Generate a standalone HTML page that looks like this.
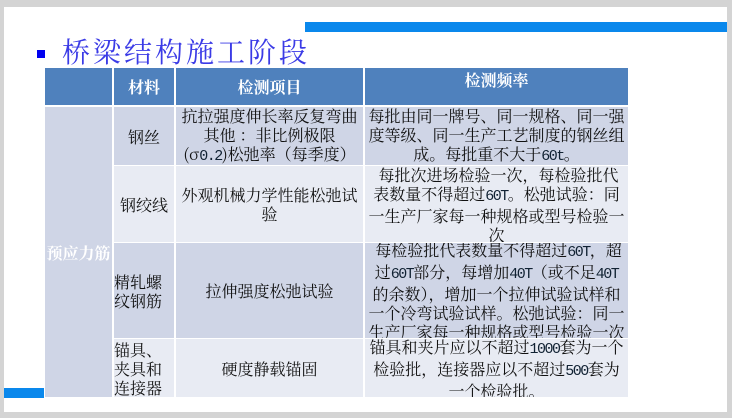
<!DOCTYPE html><html><head><meta charset="utf-8"><style>
body{margin:0;width:732px;height:418px;background:#d4d4d4;position:relative;overflow:hidden;font-family:"Liberation Serif","Noto Serif CJK SC",serif}
.slide{position:absolute;left:4px;top:7px;width:723px;height:405px;background:#fff}
.bar{position:absolute;background:#0a88ec}
.t{position:absolute;left:62px;top:33px;font-size:28px;letter-spacing:3px;color:#3b3be6;font-family:"Noto Serif CJK SC",serif;line-height:36px;white-space:nowrap}
.b{position:absolute;left:37px;top:50px;width:8px;height:8px;background:#0000f0}
.c{position:absolute;display:flex;flex-direction:column;justify-content:center;align-items:center;text-align:center;font-size:16px;line-height:19px;color:#111;white-space:nowrap;font-family:"Noto Serif CJK SC",serif;overflow:hidden}
.c>div{text-align:inherit}
.h{background:#4f81bd;color:#fff;font-weight:bold}
.d{background:#cfd5e6}.l{background:#e8ebf3}
.w{color:#fff;font-weight:bold}
.n{font-family:"Liberation Mono",monospace;font-size:15px;letter-spacing:-1.5px;color:#123}
</style></head><body>
<div class="slide"></div>
<div class="bar" style="left:305px;top:22px;width:422px;height:10px"></div>
<div class="bar" style="left:4px;top:388px;width:40px;height:10px"></div>
<div class="b"></div><div class="t">桥梁结构施工阶段</div>

<div class="c h" style="left:45px;top:68px;width:67px;height:37px"></div>
<div class="c h" style="left:114px;top:68px;width:60px;height:37px"><div>材料</div></div>
<div class="c h" style="left:176px;top:68px;width:187px;height:37px"><div>检测项目</div></div>
<div class="c h" style="left:365px;top:68px;width:263px;height:37px;justify-content:flex-start;padding-top:2px;box-sizing:border-box"><div>检测频率</div></div>

<div class="c d w" style="left:45px;top:107px;width:67px;height:290px"><div>预应力筋</div></div>

<div class="c d" style="left:114px;top:107px;width:60px;height:58px"><div>钢丝</div></div>
<div class="c d" style="left:176px;top:107px;width:187px;height:58px"><div>抗拉强度伸长率反复弯曲<br>其他 ：非比例极限<br>(σ<span class="n">0.2</span>)松弛率（每季度）</div></div>
<div class="c d" style="left:365px;top:107px;width:263px;height:58px"><div>每批由同一牌号、同一规格、同一强<br>度等级、同一生产工艺制度的钢丝组<br>成。每批重不大于<span class="n">60t</span>。</div></div>

<div class="c l" style="left:114px;top:166px;width:60px;height:76px"><div>钢绞线</div></div>
<div class="c l" style="left:176px;top:166px;width:187px;height:76px"><div>外观机械力学性能松弛试<br>验</div></div>
<div class="c l" style="left:365px;top:166px;width:263px;height:76px"><div>&nbsp;每批次进场检验一次，每检验批代<br>表数量不得超过<span class="n">60T</span>。松弛试验：同<br>一生产厂家每一种规格或型号检验一<br>次</div></div>

<div class="c d" style="left:114px;top:243px;width:60px;height:95px;align-items:flex-start;text-align:left"><div>精轧螺<br>纹钢筋</div></div>
<div class="c d" style="left:176px;top:243px;width:187px;height:95px"><div>拉伸强度松弛试验</div></div>
<div class="c d" style="left:365px;top:243px;width:263px;height:95px"><div>&nbsp;每检验批代表数量不得超过<span class="n">60T</span>，超<br>过<span class="n">60T</span>部分，每增加<span class="n">40T</span>（或不足<span class="n">40T</span><br>的余数），增加一个拉伸试验试样和<br>一个冷弯试验试样。松弛试验：同一<br>生产厂家每一种规格或型号检验一次</div></div>

<div class="c l" style="left:114px;top:339px;width:60px;height:58px;align-items:flex-start;text-align:left"><div>锚具、<br>夹具和<br>连接器</div></div>
<div class="c l" style="left:176px;top:339px;width:187px;height:58px"><div>硬度静载锚固</div></div>
<div class="c l" style="left:365px;top:339px;width:263px;height:58px;justify-content:flex-start"><div style="margin-top:-2px">锚具和夹片应以不超过<span class="n">1000</span>套为一个<br>检验批，连接器应以不超过<span class="n">500</span>套为<br>一个检验批。</div></div>
</body></html>
